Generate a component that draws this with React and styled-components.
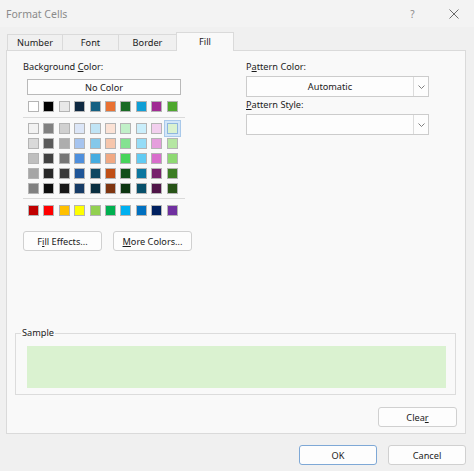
import React from 'react';
import styled, { createGlobalStyle, css } from 'styled-components';

const GlobalStyle = createGlobalStyle`
  html, body {
    margin: 0;
    padding: 0;
    background: #f0f0f0;
  }
  body {
    font-family: "Noto Sans", "Open Sans", "DejaVu Sans", sans-serif;
    font-size: 9.2px;
    color: #1b1b1b;
  }
  * {
    box-sizing: border-box;
  }
`;

const THEME = ['#ffffff', '#000000', '#e8e8e8', '#0e2841', '#156082', '#e97132', '#196b24', '#0f9ed5', '#a02b93', '#4ea72e'];

const TINTS = [
  ['#f2f2f2', '#808080', '#d0d0d0', '#dce6f7', '#c0e4f5', '#fbe2d5', '#c1f0c8', '#caeefb', '#f2cfee', '#daf2d0'],
  ['#d9d9d9', '#595959', '#adadad', '#a6c4ef', '#84c8ea', '#f6c6ac', '#84e291', '#95dcf7', '#e59edd', '#b5e6a2'],
  ['#bfbfbf', '#404040', '#757575', '#4e8fdd', '#45ace0', '#f1a983', '#47d45a', '#61cbf3', '#d86ecc', '#8ed973'],
  ['#a6a6a6', '#262626', '#3a3a3a', '#1f5597', '#0f4761', '#c04f15', '#124f1a', '#0b769f', '#77206d', '#3b7d23'],
  ['#808080', '#0d0d0d', '#171717', '#163b66', '#0a2f40', '#7f3510', '#0c3511', '#074f6a', '#4f1548', '#275317'],
];

const STANDARD = ['#c00000', '#ff0000', '#ffc000', '#ffff00', '#92d050', '#00b050', '#00b0f0', '#0070c0', '#002060', '#7030a0'];

const Window = styled.div`
  width: 474px;
  height: 471px;
  background: #f0f0f0;
  display: flex;
  flex-direction: column;
  overflow: hidden;
`;

const TitleBar = styled.div`
  height: 27px;
  background: #f3f3f3;
  display: flex;
  align-items: center;
  padding-left: 6px;
`;

const Title = styled.div`
  flex: 1;
  color: #8a8a8a;
  font-size: 10.5px;
`;

const TitleButton = styled.div`
  width: 41px;
  height: 27px;
  display: flex;
  align-items: center;
  justify-content: center;
  color: #8a8a8a;
  font-size: 10px;
`;

const Body = styled.div`
  padding: 0 8px 0 6px;
`;

const TabStrip = styled.div`
  height: 23px;
  display: flex;
  align-items: flex-end;
  padding-left: 1px;
`;

const Tab = styled.div`
  width: ${p => p.w}px;
  height: 16px;
  display: flex;
  align-items: center;
  justify-content: center;
  border: 1px solid #dadada;
  border-bottom: none;
  margin-right: -1px;
  background: #f0f0f0;
  ${p =>
    p.active &&
    css`
      height: 19px;
      margin-bottom: -1px;
      background: #f9f9f9;
      position: relative;
      padding-bottom: 1px;
    `};
`;

const Panel = styled.div`
  height: 384px;
  border: 1px solid #dadada;
  background: #f9f9f9;
  display: flex;
  flex-direction: column;
`;

const TopSection = styled.div`
  display: grid;
  grid-template-columns: 223px 183px;
  padding: 9px 0 0 16px;
`;

const Column = styled.div`
  display: flex;
  flex-direction: column;
  align-items: flex-start;
`;

const Label = styled.div`
  line-height: 14px;
  height: 14px;
  margin-top: ${p => p.mt || 0}px;
  white-space: nowrap;
`;

const NoColor = styled.div`
  width: 154px;
  height: 16px;
  margin: 5px 0 0 4px;
  border: 1px solid #b9b9b9;
  background: #fdfdfd;
  display: flex;
  align-items: center;
  justify-content: center;
`;

const SwatchGrid = styled.div`
  display: grid;
  grid-template-columns: repeat(10, 11px);
  grid-auto-rows: 11px;
  column-gap: 4.4px;
  row-gap: 4px;
  margin: ${p => p.mt}px 0 0 5px;
`;

const Swatch = styled.div`
  width: 11px;
  height: 11px;
  border: 1px solid #b4b4b4;
  background: ${p => p.color};
  ${p =>
    p.selected &&
    css`
      border-color: #8fb6de;
      box-shadow: 0 0 0 2px #d3e6f8, 0 0 0 3px #a9c9ea;
    `};
`;

const Separator = styled.div`
  width: 162px;
  height: 1px;
  background: #dadada;
  margin-top: ${p => p.mt}px;
`;

const ButtonRow = styled.div`
  display: flex;
  gap: 11px;
  margin-top: ${p => p.mt || 0}px;
`;

const Button = styled.div`
  width: ${p => p.w || 79}px;
  height: 20px;
  border: 1px solid ${p => (p.primary ? '#7ea8d6' : '#d0d0d0')};
  border-radius: 3px;
  background: #fdfdfd;
  display: flex;
  align-items: center;
  justify-content: center;
  white-space: nowrap;
`;

const Combo = styled.div`
  width: 183px;
  height: 21px;
  margin-top: 2px;
  border: 1px solid #cccccc;
  background: #fdfdfd;
  display: flex;
`;

const ComboValue = styled.div`
  flex: 1;
  display: flex;
  align-items: center;
  justify-content: center;
`;

const ComboArrow = styled.div`
  width: 15px;
  border-left: 1px solid #dcdcdc;
  display: flex;
  align-items: center;
  justify-content: center;
`;

const Spacer = styled.div`
  flex: 1;
`;

const SampleGroup = styled.fieldset`
  margin: 0 9px 0 8px;
  padding: 6px 9px 6px 11px;
  border: 1px solid #dcdcdc;
  min-width: 0;
`;

const Legend = styled.legend`
  padding: 0 1px;
  margin-left: -6px;
  line-height: 14px;
`;

const SampleFill = styled.div`
  height: 42px;
  background: ${p => p.color};
`;

const ClearRow = styled.div`
  display: flex;
  justify-content: flex-end;
  padding: 12px 8px 6px 0;
`;

const Footer = styled.div`
  display: flex;
  justify-content: flex-end;
  gap: 11px;
  padding: 11px 8px 0 0;
`;

function Chevron() {
  return (
    <svg width="7" height="4" viewBox="0 0 7 4">
      <path d="M0.5 0.5 L3.5 3.5 L6.5 0.5" fill="none" stroke="#707070" strokeWidth="0.9" />
    </svg>
  );
}

function CloseIcon() {
  return (
    <svg width="10" height="10" viewBox="0 0 10 10">
      <path d="M0.5 0.5 L9.5 9.5 M9.5 0.5 L0.5 9.5" stroke="#6a6a6a" strokeWidth="1" />
    </svg>
  );
}

export default function App() {
  const selected = '#daf2d0';
  return (
    <Window>
      <GlobalStyle />
      <TitleBar>
        <Title>Format Cells</Title>
        <TitleButton>?</TitleButton>
        <TitleButton>
          <CloseIcon />
        </TitleButton>
      </TitleBar>
      <Body>
        <TabStrip>
          <Tab w={56}>Number</Tab>
          <Tab w={57}>Font</Tab>
          <Tab w={59}>Border</Tab>
          <Tab w={58} active>
            Fill
          </Tab>
        </TabStrip>
        <Panel>
          <TopSection>
            <Column>
              <Label>
                Background <u>C</u>olor:
              </Label>
              <NoColor>No Color</NoColor>
              <SwatchGrid mt={6}>
                {THEME.map(c => (
                  <Swatch key={c} color={c} />
                ))}
              </SwatchGrid>
              <Separator mt={5} />
              <SwatchGrid mt={5}>
                {TINTS.flat().map((c, i) => (
                  <Swatch key={i} color={c} selected={c === selected} />
                ))}
              </SwatchGrid>
              <Separator mt={4} />
              <SwatchGrid mt={6}>
                {STANDARD.map(c => (
                  <Swatch key={c} color={c} />
                ))}
              </SwatchGrid>
              <ButtonRow mt={15}>
                <Button>
                  F<u>i</u>ll Effects...
                </Button>
                <Button>
                  <u>M</u>ore Colors...
                </Button>
              </ButtonRow>
            </Column>
            <Column>
              <Label>
                P<u>a</u>ttern Color:
              </Label>
              <Combo>
                <ComboValue>Automatic</ComboValue>
                <ComboArrow>
                  <Chevron />
                </ComboArrow>
              </Combo>
              <Label mt={1}>
                <u>P</u>attern Style:
              </Label>
              <Combo>
                <ComboValue />
                <ComboArrow>
                  <Chevron />
                </ComboArrow>
              </Combo>
            </Column>
          </TopSection>
          <Spacer />
          <SampleGroup>
            <Legend>Sample</Legend>
            <SampleFill color={selected} />
          </SampleGroup>
          <ClearRow>
            <Button>
              Clea<u>r</u>
            </Button>
          </ClearRow>
        </Panel>
      </Body>
      <Footer>
        <Button w={78} primary>
          OK
        </Button>
        <Button w={78}>Cancel</Button>
      </Footer>
    </Window>
  );
}
